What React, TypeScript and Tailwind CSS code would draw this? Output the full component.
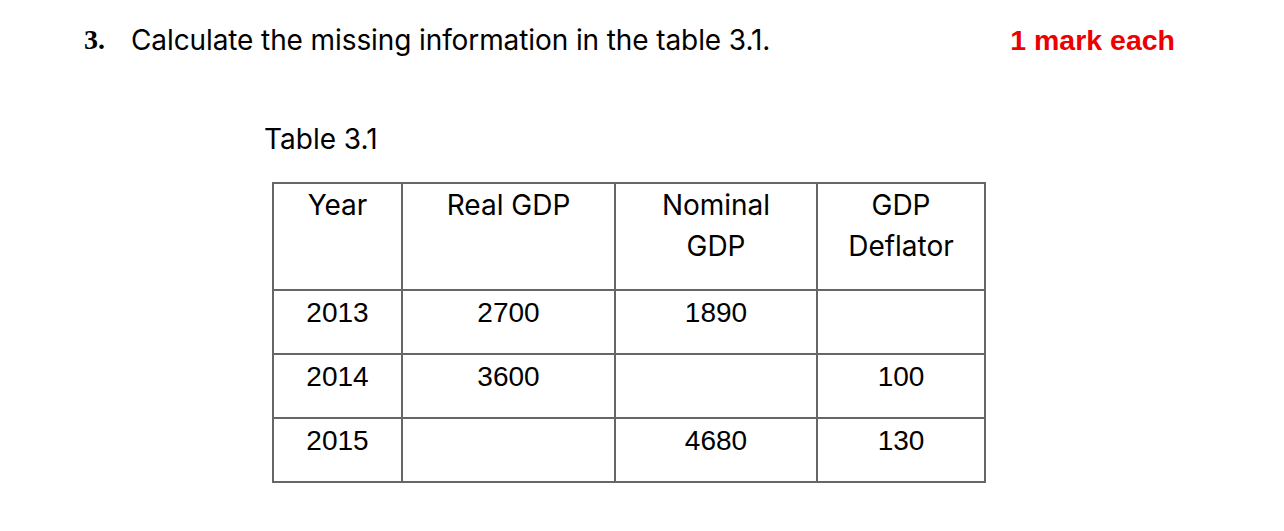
const rows = [
  { year: "2013", real: "2700", nominal: "1890", deflator: "" },
  { year: "2014", real: "3600", nominal: "", deflator: "100" },
  { year: "2015", real: "", nominal: "4680", deflator: "130" },
];

const App = () => {
  return (
    <div className="w-[1284px] h-[531px] bg-white text-black overflow-hidden">
      <div className="flex items-center pt-[24px] pl-[84px] pr-[109px]">
        <span className="w-[47px] font-['Liberation_Serif',serif] font-bold text-[28px] leading-[32px]">
          3.
        </span>
        <span className="font-['Inter',sans-serif] text-[28px] leading-[32px] tracking-[-0.1px]">
          Calculate the missing information in the table 3.1.
        </span>
        <span className="ml-auto font-['Liberation_Sans',sans-serif] font-bold text-[28.5px] leading-[32px] text-[#ee0000]">
          1 mark each
        </span>
      </div>

      <div className="pl-[264px] pt-[67px] font-['Inter',sans-serif] text-[28px] leading-[32px]">
        Table 3.1
      </div>

      <div className="pl-[272px] pt-[27px]">
        <table className="border-collapse border-2 border-[#666666] text-center text-[28px] leading-[41px]">
          <thead>
            <tr className="h-[107px] align-top font-['Inter',sans-serif]">
              <th className="w-[129px] border-2 border-[#666666] font-normal pt-[1px]">Year</th>
              <th className="w-[213px] border-2 border-[#666666] font-normal pt-[1px]">Real GDP</th>
              <th className="w-[202px] border-2 border-[#666666] font-normal pt-[1px]">
                Nominal
                <br />
                GDP
              </th>
              <th className="w-[168px] border-2 border-[#666666] font-normal pt-[1px]">
                GDP
                <br />
                Deflator
              </th>
            </tr>
          </thead>
          <tbody className="font-['Liberation_Sans',sans-serif]">
            {rows.map((r) => (
              <tr key={r.year} className="h-[64px] align-top">
                <td className="border-2 border-[#666666] pt-[1px]">{r.year}</td>
                <td className="border-2 border-[#666666] pt-[1px]">{r.real}</td>
                <td className="border-2 border-[#666666] pt-[1px]">{r.nominal}</td>
                <td className="border-2 border-[#666666] pt-[1px]">{r.deflator}</td>
              </tr>
            ))}
          </tbody>
        </table>
      </div>
    </div>
  );
};

export default App;
